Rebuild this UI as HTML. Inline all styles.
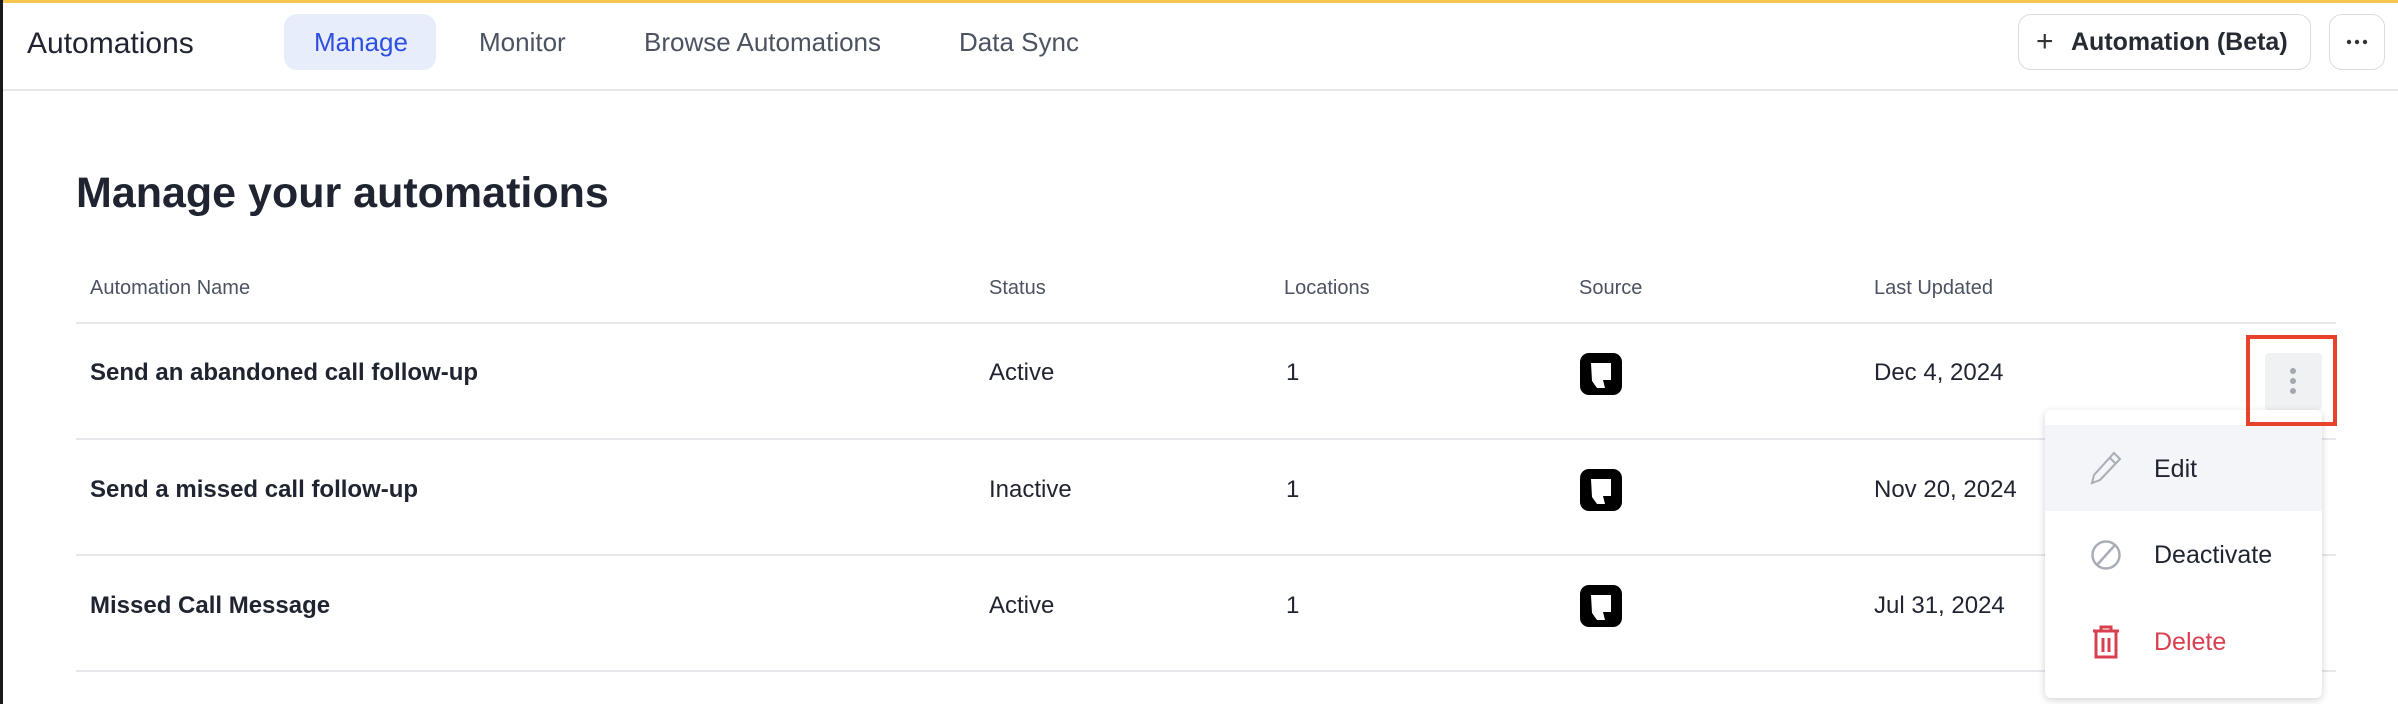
<!DOCTYPE html>
<html><head><meta charset="utf-8"><style>
*{margin:0;padding:0;box-sizing:border-box}
body{width:2398px;height:704px;overflow:hidden;background:#fff;font-family:"Liberation Sans",sans-serif;color:#1f2430;position:relative}
.abs{position:absolute}
.top{left:0;top:0;width:2398px;height:3px;background:#f5c54e}
.lb{left:0;top:0;width:3px;height:704px;background:#1a1a1a}
.navline{left:3px;top:89px;width:2395px;height:2px;background:#e4e6ea}
.nav{font-size:26px;color:#4b5260;top:27px}
.t{white-space:nowrap}
.pill{left:284px;top:14px;width:152px;height:56px;background:#e7edfb;border-radius:13px}
.btn{border:1.5px solid #d9dce1;border-radius:13px;background:#fff}
.th{font-size:20px;color:#4b5260;top:277px}
.row{font-size:24px}
.line{left:76px;width:2260px;height:2px;background:#e5e7eb}
.src{width:42px;height:42px}
.mi{font-size:25px}
</style></head><body>
<div class="abs top"></div><div class="abs lb"></div>
<div class="abs navline"></div>
<div class="abs t" style="left:27px;top:27px;font-size:30px;color:#1f2430">Automations</div>
<div class="abs pill"></div>
<div class="abs t nav" style="left:314px;color:#2f4fe0">Manage</div>
<div class="abs t nav" style="left:479px">Monitor</div>
<div class="abs t nav" style="left:644px">Browse Automations</div>
<div class="abs t nav" style="left:959px">Data Sync</div>
<div class="abs btn" style="left:2018px;top:14px;width:293px;height:56px"></div>
<div class="abs t" style="left:2036px;top:25px;font-size:30px;font-weight:300;color:#333">+</div>
<div class="abs t" style="left:2071px;top:28px;font-size:25px;font-weight:bold;color:#262a33">Automation (Beta)</div>
<div class="abs btn" style="left:2329px;top:14px;width:56px;height:56px"></div>
<svg class="abs" style="left:2345px;top:39px" width="24" height="6"><circle cx="4" cy="3" r="2.2" fill="#333"/><circle cx="12" cy="3" r="2.2" fill="#333"/><circle cx="20" cy="3" r="2.2" fill="#333"/></svg>

<div class="abs t" style="left:76px;top:169px;font-size:43px;font-weight:bold;color:#1f2430">Manage your automations</div>
<div class="abs t th" style="left:90px">Automation Name</div>
<div class="abs t th" style="left:989px">Status</div>
<div class="abs t th" style="left:1284px">Locations</div>
<div class="abs t th" style="left:1579px">Source</div>
<div class="abs t th" style="left:1874px">Last Updated</div>
<div class="abs line" style="top:322px"></div>
<div class="abs line" style="top:438px"></div>
<div class="abs line" style="top:554px"></div>
<div class="abs line" style="top:670px"></div>

<div class="abs t row" style="left:90px;top:359px;font-weight:bold">Send an abandoned call follow-up</div>
<div class="abs t row" style="left:989px;top:359px">Active</div>
<div class="abs t row" style="left:1286px;top:359px">1</div>
<div class="abs t row" style="left:1874px;top:359px">Dec 4, 2024</div>
<div class="abs t row" style="left:90px;top:476px;font-weight:bold">Send a missed call follow-up</div>
<div class="abs t row" style="left:989px;top:476px">Inactive</div>
<div class="abs t row" style="left:1286px;top:476px">1</div>
<div class="abs t row" style="left:1874px;top:476px">Nov 20, 2024</div>
<div class="abs t row" style="left:90px;top:592px;font-weight:bold">Missed Call Message</div>
<div class="abs t row" style="left:989px;top:592px">Active</div>
<div class="abs t row" style="left:1286px;top:592px">1</div>
<div class="abs t row" style="left:1874px;top:592px">Jul 31, 2024</div>

<svg class="abs src" style="left:1580px;top:353px" viewBox="0 0 42 42"><rect width="42" height="42" rx="9" fill="#000"/><path d="M11 10H31V27H23L25 35H17L12 28Z" fill="#fff"/></svg>
<svg class="abs src" style="left:1580px;top:469px" viewBox="0 0 42 42"><rect width="42" height="42" rx="9" fill="#000"/><path d="M11 10H31V27H23L25 35H17L12 28Z" fill="#fff"/></svg>
<svg class="abs src" style="left:1580px;top:585px" viewBox="0 0 42 42"><rect width="42" height="42" rx="9" fill="#000"/><path d="M11 10H31V27H23L25 35H17L12 28Z" fill="#fff"/></svg>

<div class="abs" style="left:2265px;top:353px;width:57px;height:57px;background:#f0f1f3;border-radius:4px"></div>
<svg class="abs" style="left:2285px;top:365px" width="16" height="34"><circle cx="8" cy="6" r="3" fill="#a3a8b0"/><circle cx="8" cy="16" r="3" fill="#a3a8b0"/><circle cx="8" cy="26" r="3" fill="#a3a8b0"/></svg>

<div class="abs" style="left:2045px;top:410px;width:277px;height:288px;background:#fff;border-radius:6px;box-shadow:0 2px 8px rgba(0,0,0,.18)"></div>
<div class="abs" style="left:2045px;top:425px;width:277px;height:86px;background:#f4f5f8"></div>
<div class="abs" style="left:2246px;top:335px;width:91px;height:91px;border:4px solid #e8432a"></div>
<svg class="abs" style="left:2088px;top:450px" width="36" height="36" viewBox="0 0 36 36" fill="none" stroke="#a9adb5" stroke-width="2"><path d="M26 3L32 9L12 30L4 33L6 25Z M22 8L28 14"/></svg>
<div class="abs t mi" style="left:2154px;top:455px">Edit</div>
<svg class="abs" style="left:2089px;top:538px" width="34" height="34" viewBox="0 0 34 34" fill="none" stroke="#a9adb5" stroke-width="2.5"><circle cx="17" cy="17" r="13.5"/><path d="M26 7L8 27"/></svg>
<div class="abs t mi" style="left:2154px;top:541px">Deactivate</div>
<svg class="abs" style="left:2090px;top:624px" width="32" height="36" viewBox="0 0 32 36" fill="none" stroke="#d9404f" stroke-width="3"><path d="M3 7H29M11 7V3H21V7M6 8V33H26V8M13 14V28M19 14V28"/></svg>
<div class="abs t mi" style="left:2154px;top:628px;color:#d9404f">Delete</div>
</body></html>
